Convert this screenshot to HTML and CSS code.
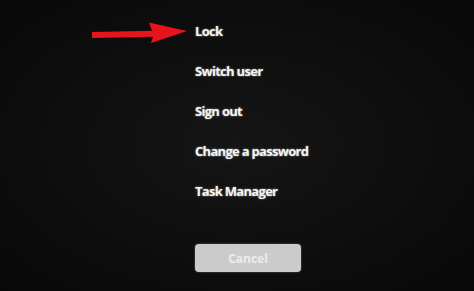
FILE: index.html
```html
<!DOCTYPE html>
<html lang="en">
<head>
<meta charset="utf-8">
<link rel="stylesheet" href="styles.css">
</head>
<body>
<div class="screen">
  <svg class="arrow" width="100" height="24" viewBox="0 0 100 24">
    <path d="M0 10 L60 8.8 L57 0.5 L95 9 L59 21 L61 14.8 L0 16 Z" fill="#e8131b"/>
  </svg>
  <ul class="menu">
    <li>Lock</li>
    <li>Switch user</li>
    <li>Sign out</li>
    <li>Change a password</li>
    <li>Task Manager</li>
  </ul>
  <div class="actions">
    <button class="cancel">Cancel</button>
  </div>
</div>
</body>
</html>
```
FILE: styles.css
```css
html, body {
  margin: 0;
  padding: 0;
  background: #0d0d0d;
}
.screen {
  position: relative;
  width: 474px;
  height: 291px;
  box-sizing: border-box;
  padding: 22px 0 0 195px;
  background: radial-gradient(ellipse at 50% 50%, #151515 0%, #0c0c0c 70%, #080808 100%);
  font-family: "Open Sans", "Noto Sans", sans-serif;
  overflow: hidden;
}
.arrow {
  position: absolute;
  left: 92px;
  top: 22px;
}
.menu {
  list-style: none;
  margin: 0;
  padding: 0;
  display: flex;
  flex-direction: column;
  gap: 22px;
}
.menu li {
  color: #f4f4f4;
  font-size: 13px;
  font-weight: 700;
  line-height: 18px;
  letter-spacing: -0.7px;
  text-shadow: 0 0 2px rgba(255,255,255,0.6);
}
.actions {
  margin-top: 44px;
}
.cancel {
  width: 106px;
  height: 28px;
  border: none;
  border-radius: 4px;
  background: #cbcbcb;
  color: #ededed;
  font-family: "Open Sans", sans-serif;
  font-size: 12px;
  font-weight: 700;
  box-shadow: 0 0 2px rgba(255,255,255,0.4);
}
```
